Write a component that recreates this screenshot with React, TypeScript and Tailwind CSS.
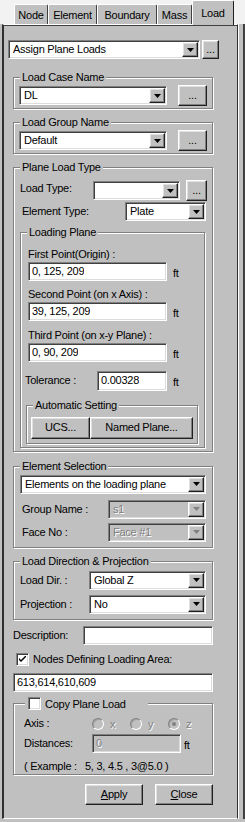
import React from 'react';

const sunken =
  'border border-t-[#808080] border-l-[#808080] border-b-white border-r-white shadow-[inset_1px_1px_0_#404040,inset_-1px_-1px_0_#dcdcdc]';
const raised =
  'border border-t-white border-l-white border-b-[#202020] border-r-[#202020] shadow-[inset_-1px_-1px_0_#808080,inset_1px_1px_0_#e0e0e0]';
const grayText = 'text-[#808080] [text-shadow:1px_1px_0_#fff]';

function Arrow({ disabled = false }: { disabled?: boolean }) {
  return (
    <span className={`flex h-[15px] w-[16px] shrink-0 items-center justify-center bg-[#c0c0c0] ${raised}`}>
      <svg width="7" height="4" viewBox="0 0 7 4">
        <path d="M0 0 H7 L3.5 4 Z" fill={disabled ? '#808080' : '#000'} />
      </svg>
    </span>
  );
}

function Combo({ value, className = '', disabled = false }: { value: string; className?: string; disabled?: boolean }) {
  return (
    <div className={`flex h-[19px] shrink-0 items-center p-[1px] ${sunken} ${disabled ? 'bg-[#c0c0c0]' : 'bg-white'} ${className}`}>
      <span className={`flex-1 truncate pl-[3px] leading-[15px] ${disabled ? grayText : ''}`}>{value}</span>
      <Arrow disabled={disabled} />
    </div>
  );
}

function Input({ value, className = '', disabled = false }: { value: string; className?: string; disabled?: boolean }) {
  return (
    <div className={`flex h-[19px] shrink-0 items-center p-[1px] ${sunken} ${disabled ? 'bg-[#c0c0c0]' : 'bg-white'} ${className}`}>
      <span className={`truncate pl-[2px] leading-[15px] ${disabled ? grayText : ''}`}>{value}</span>
    </div>
  );
}

function Btn({ children, className = '' }: { children: React.ReactNode; className?: string }) {
  return (
    <div className={`flex shrink-0 items-center justify-center bg-[#c0c0c0] ${raised} ${className}`}>{children}</div>
  );
}

function Group({ label, className = '', children }: { label?: string; className?: string; children: React.ReactNode }) {
  return (
    <div className={`relative flex shrink-0 flex-col border border-[#808080] shadow-[inset_1px_1px_0_#fff,1px_1px_0_#fff] ${className}`}>
      {label && (
        <span className="absolute left-[6px] top-[-8px] whitespace-nowrap bg-[#c0c0c0] px-[2px] leading-[14px]">{label}</span>
      )}
      {children}
    </div>
  );
}

function Check({ checked }: { checked: boolean }) {
  return (
    <span className={`flex h-[13px] w-[13px] shrink-0 items-center justify-center bg-white ${sunken}`}>
      {checked && (
        <svg width="7" height="7" viewBox="0 0 7 7">
          <path d="M0 2 L0 4 L2 6 L7 1 L7 -1 L2 4 Z" fill="#000" />
        </svg>
      )}
    </span>
  );
}

function Radio({ label, on = false }: { label: string; on?: boolean }) {
  return (
    <span className="flex w-[38px] items-center">
      <span className="flex h-[12px] w-[12px] items-center justify-center rounded-full border border-t-[#808080] border-l-[#808080] border-b-white border-r-white bg-[#c0c0c0] shadow-[inset_1px_1px_0_#a0a0a0]">
        {on && <span className="h-[4px] w-[4px] rounded-full bg-[#808080]" />}
      </span>
      <span className={`ml-[6px] leading-[14px] ${grayText}`}>{label}</span>
    </span>
  );
}

const tabs = [
  { label: 'Node', w: 'w-[34px]' },
  { label: 'Element', w: 'w-[49px]' },
  { label: 'Boundary', w: 'w-[60px]' },
  { label: 'Mass', w: 'w-[35px]' },
];

export default function App() {
  return (
    <div className="flex h-[822px] w-[245px] flex-col overflow-hidden bg-[#c0c0c0] font-['Liberation_Sans',Arial,sans-serif] text-[11px] tracking-[-0.25px] text-black">
      {/* Tabs */}
      <div className="flex h-[24px] shrink-0 items-end bg-[#f2f2f2] pl-[14px]">
        {tabs.map((t) => (
          <div
            key={t.label}
            className={`flex h-[20px] ${t.w} items-center justify-center rounded-t-[2px] border-l border-t border-r border-l-white border-t-white border-r-[#404040] bg-[#c0c0c0] leading-[14px]`}
          >
            {t.label}
          </div>
        ))}
        <div className="relative z-10 -mb-px flex h-[25px] w-[42px] items-center justify-center rounded-t-[2px] border-l border-t border-r border-l-white border-t-white border-r-[#202020] bg-[#c0c0c0] pb-[1px] leading-[14px]">
          Load
        </div>
      </div>

      <div className="flex h-[795px] shrink-0">
        <div className="ml-[2px] flex w-[236px] flex-col border-l-2 border-t border-b border-r border-l-[#303030] border-t-white border-b-white border-r-[#303030] pt-[2px] shadow-[inset_0_1px_0_#404040]">
          {/* Command */}
          <div className="ml-[4px] mt-[13px] flex gap-[2px]">
            <Combo value="Assign Plane Loads" className="w-[192px]" />
            <Btn className="h-[19px] w-[17px]">...</Btn>
          </div>

          <Group label="Load Case Name" className="ml-[9px] mt-[18px] w-[200px] pb-[2px]">
            <div className="ml-[5px] mt-[7px] flex items-center gap-[11px]">
              <Combo value="DL" className="w-[148px]" />
              <Btn className="h-[21px] w-[29px]">...</Btn>
            </div>
          </Group>

          <Group label="Load Group Name" className="ml-[9px] mt-[13px] w-[200px] pb-[2px]">
            <div className="ml-[5px] mt-[7px] flex items-center gap-[11px]">
              <Combo value="Default" className="w-[148px]" />
              <Btn className="h-[21px] w-[29px]">...</Btn>
            </div>
          </Group>

          <Group label="Plane Load Type" className="ml-[9px] mt-[13px] w-[200px] pb-[3px]">
            <div className="ml-[6px] mt-[12px] flex h-[21px] items-center">
              <span className="mb-[4px] w-[73px] whitespace-nowrap">Load Type:</span>
              <Combo value="" className="w-[87px]" />
              <Btn className="ml-[6px] h-[21px] w-[21px]">...</Btn>
            </div>
            <div className="ml-[8px] mt-[1px] flex items-center">
              <span className="w-[103px] whitespace-nowrap">Element Type:</span>
              <Combo value="Plate" className="w-[81px]" />
            </div>

            <Group label="Loading Plane" className="ml-[6px] mt-[11px] w-[185px] pb-[3px]">
              <span className="ml-[7px] mt-[14px] leading-[14px] whitespace-nowrap">First Point(Origin) :</span>
              <div className="ml-[7px] mt-[1px] flex items-center">
                <Input value="0, 125, 209" className="w-[139px]" />
                <span className="ml-[6px] mt-[3px]">ft</span>
              </div>
              <span className="ml-[7px] mt-[5px] leading-[14px] whitespace-nowrap">Second Point (on x Axis) :</span>
              <div className="ml-[7px] mt-[1px] flex items-center">
                <Input value="39, 125, 209" className="w-[139px]" />
                <span className="ml-[6px] mt-[3px]">ft</span>
              </div>
              <span className="ml-[7px] mt-[7px] leading-[14px] whitespace-nowrap">Third Point (on x-y Plane) :</span>
              <div className="ml-[7px] mt-[1px] flex items-center">
                <Input value="0, 90, 209" className="w-[139px]" />
                <span className="ml-[6px] mt-[3px]">ft</span>
              </div>
              <div className="ml-[4px] mt-[8px] flex items-center">
                <span className="w-[72px] whitespace-nowrap">Tolerance :</span>
                <Input value="0.00328" className="h-[20px] w-[70px]" />
                <span className="ml-[6px] mt-[3px]">ft</span>
              </div>

              <Group label="Automatic Setting" className="ml-[5px] mt-[14px] w-[172px] pb-[4px]">
                <div className="ml-[4px] mt-[11px] flex">
                  <Btn className="h-[22px] w-[59px]">UCS...</Btn>
                  <Btn className="h-[22px] w-[103px]">Named Plane...</Btn>
                </div>
              </Group>
            </Group>
          </Group>

          <Group label="Element Selection" className="ml-[9px] mt-[14px] w-[200px] pb-[5px]">
            <Combo value="Elements on the loading plane" className="ml-[6px] mt-[8px] w-[186px]" />
            <div className="ml-[8px] mt-[6px] flex items-center">
              <span className="w-[86px] whitespace-nowrap">Group Name :</span>
              <Combo value="s1" disabled className="w-[98px]" />
            </div>
            <div className="ml-[8px] mt-[4px] flex items-center">
              <span className="w-[86px] whitespace-nowrap">Face No :</span>
              <Combo value="Face #1" disabled className="w-[98px]" />
            </div>
          </Group>

          <Group label="Load Direction & Projection" className="ml-[9px] mt-[13px] w-[200px] pb-[5px]">
            <div className="ml-[6px] mt-[9px] flex items-center">
              <span className="w-[69px] whitespace-nowrap">Load Dir. :</span>
              <Combo value="Global Z" className="w-[117px]" />
            </div>
            <div className="ml-[6px] mt-[5px] flex items-center">
              <span className="w-[69px] whitespace-nowrap">Projection :</span>
              <Combo value="No" className="w-[117px]" />
            </div>
          </Group>

          <div className="ml-[9px] mt-[6px] flex items-center">
            <span className="w-[70px] whitespace-nowrap">Description:</span>
            <Input value="" className="w-[130px]" />
          </div>

          <div className="ml-[12px] mt-[8px] flex h-[13px] items-center">
            <Check checked />
            <span className="ml-[4px] whitespace-nowrap leading-[14px]">Nodes Defining Loading Area:</span>
          </div>

          <Input value="613,614,610,609" className="ml-[9px] mt-[7px] w-[200px]" />

          <Group className="ml-[9px] mt-[11px] w-[200px] pb-[1px]">
            <span className="absolute left-[11px] top-[-7px] flex h-[14px] w-[123px] items-center bg-[#c0c0c0] pl-[3px]">
              <Check checked={false} />
              <span className="ml-[4px] whitespace-nowrap leading-[14px]">Copy Plane Load</span>
            </span>
            <div className="ml-[10px] mt-[13px] flex h-[14px] items-center">
              <span className="w-[68px] whitespace-nowrap">Axis :</span>
              <Radio label="x" />
              <Radio label="y" />
              <Radio label="z" on />
            </div>
            <div className="ml-[10px] mt-[3px] flex items-center">
              <span className="w-[68px] whitespace-nowrap">Distances:</span>
              <Input value="0" disabled className="w-[89px]" />
              <span className="ml-[3px] mt-[3px]">ft</span>
            </div>
            <div className="ml-[10px] mt-[6px] flex h-[14px] items-center whitespace-nowrap">
              <span className="w-[61px]">( Example :</span>
              <span>5, 3, 4.5 , 3@5.0 )</span>
            </div>
          </Group>

          <div className="ml-[81px] mt-[9px] flex gap-[12px]">
            <Btn className="h-[21px] w-[58px]">
              <span>
                <u>A</u>pply
              </span>
            </Btn>
            <Btn className="h-[21px] w-[58px]">
              <span>
                <u>C</u>lose
              </span>
            </Btn>
          </div>
        </div>
        <div className="w-[1px] bg-white" />
        <div className="flex-1 border-r-2 border-r-[#404040]" />
      </div>
    </div>
  );
}
